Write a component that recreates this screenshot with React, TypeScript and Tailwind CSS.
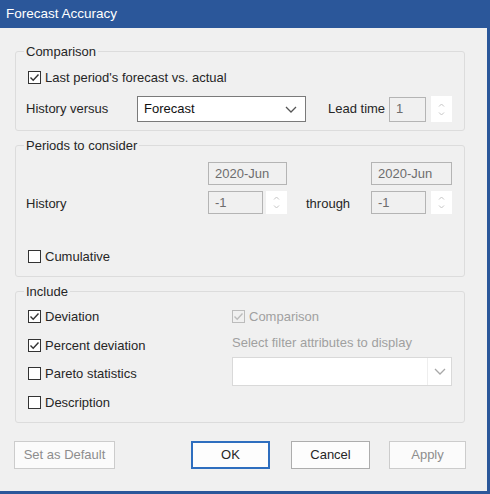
import React from 'react'

const font = { fontFamily: '"Liberation Sans", Arial, sans-serif' }

function Check({ checked, disabled }: { checked?: boolean; disabled?: boolean }) {
  return (
    <span
      className={
        'inline-flex w-[13px] h-[13px] shrink-0 items-center justify-center border ' +
        (disabled ? 'border-[#bcbcbc] bg-[#f0f0f0]' : 'border-[#333333] bg-white')
      }
    >
      {checked && (
        <svg width="11" height="11" viewBox="0 0 11 11">
          <path d="M1.5 5.5 L4.2 8.2 L9.5 2.5" fill="none" stroke={disabled ? '#bcbcbc' : '#333333'} strokeWidth="1.4" />
        </svg>
      )}
    </span>
  )
}

function CheckRow({ label, checked, disabled }: { label: string; checked?: boolean; disabled?: boolean }) {
  return (
    <div className="flex items-center gap-[4px]">
      <Check checked={checked} disabled={disabled} />
      <span className={disabled ? 'text-[#a0a0a0]' : 'text-[#262626]'}>{label}</span>
    </div>
  )
}

function Spinner({ h }: { h: string }) {
  return (
    <div className={'w-[21px] bg-white flex flex-col items-center justify-center gap-[5px] ' + h}>
      <svg width="7" height="4" viewBox="0 0 7 4">
        <path d="M1 3.5 L3.5 1 L6 3.5" fill="none" stroke="#c4c4c4" strokeWidth="1" />
      </svg>
      <svg width="7" height="4" viewBox="0 0 7 4">
        <path d="M1 0.5 L3.5 3 L6 0.5" fill="none" stroke="#c4c4c4" strokeWidth="1" />
      </svg>
    </div>
  )
}

function DisabledBox({ value, w }: { value: string; w: string }) {
  return (
    <div className={'h-[23px] border border-[#b4b4b4] bg-[#f0f0f0] flex items-center px-[6px] text-[#6d6d6d] ' + w}>
      {value}
    </div>
  )
}

function Chevron({ color }: { color: string }) {
  return (
    <svg width="12" height="7" viewBox="0 0 12 7">
      <path d="M1 1 L6 6 L11 1" fill="none" stroke={color} strokeWidth="1.3" />
    </svg>
  )
}

function Group({ title, h, children }: { title: string; h: string; children: React.ReactNode }) {
  return (
    <fieldset className={'w-[450px] border border-[#dcdcdc] rounded-[3px] px-0 ' + h}>
      <legend className="ml-[8px] px-[2px] leading-[15px] text-[#262626]">{title}</legend>
      {children}
    </fieldset>
  )
}

function Btn({ label, w, kind }: { label: string; w: string; kind: 'default' | 'normal' | 'disabled' }) {
  const cls =
    kind === 'default'
      ? 'border-[#2e6ebf] border-[2px] text-[#262626] bg-[#fdfdfd]'
      : kind === 'disabled'
      ? 'border border-[#cccccc] text-[#8d8d8d] bg-[#fbfbfb]'
      : 'border border-[#adadad] text-[#262626] bg-[#fdfdfd]'
  return <div className={'h-[28px] flex items-center justify-center ' + w + ' ' + cls}>{label}</div>
}

export default function App() {
  return (
    <div className="w-[490px] h-[494px] bg-[#2b579a] flex flex-col pr-[3px] pb-[3px] text-[13px]" style={font}>
      <div className="h-[28px] shrink-0 flex items-center pl-[6px] text-white text-[13.5px]">Forecast Accuracy</div>
      <div className="flex-1 bg-[#f0f0f0] pl-[15px] pt-[16px] flex flex-col">
        <Group title="Comparison" h="h-[87px]">
          <div className="pl-[12px] pt-[9px] h-[34px]">
            <CheckRow label="Last period's forecast vs. actual" checked />
          </div>
          <div className="flex items-center h-[26px] mt-[3px]">
            <span className="pl-[10px] w-[121px] text-[#262626]">History versus</span>
            <div className="w-[169px] h-[26px] bg-white border border-[#7a7a7a] flex items-center justify-between pl-[6px] pr-[8px] text-[#111]">
              <span>Forecast</span>
              <Chevron color="#555555" />
            </div>
            <span className="ml-[22px] text-[#262626]">Lead time</span>
            <div className="ml-[4px] w-[37px] h-[25px] border border-[#b4b4b4] bg-[#f0f0f0] flex items-center px-[6px] text-[#6d6d6d]">1</div>
            <div className="ml-[5px]">
              <Spinner h="h-[26px]" />
            </div>
          </div>
        </Group>

        <div className="h-[7px]" />

        <Group title="Periods to consider" h="h-[139px]">
          <div className="flex items-start pt-[9px]">
            <span className="pl-[10px] w-[192px] mt-[32px] text-[#262626]">History</span>
            <div className="flex flex-col gap-[6px] w-[79px]">
              <DisabledBox value="2020-Jun" w="w-[79px]" />
              <div className="flex items-center justify-between">
                <DisabledBox value="-1" w="w-[55px]" />
                <Spinner h="h-[23px]" />
              </div>
            </div>
            <span className="ml-[19px] mt-[32px] w-[65px] text-[#262626]">through</span>
            <div className="flex flex-col gap-[6px] w-[81px]">
              <DisabledBox value="2020-Jun" w="w-[81px]" />
              <div className="flex items-center justify-between">
                <DisabledBox value="-1" w="w-[55px]" />
                <Spinner h="h-[23px]" />
              </div>
            </div>
          </div>
          <div className="pl-[12px] mt-[33px]">
            <CheckRow label="Cumulative" />
          </div>
        </Group>

        <div className="h-[7px]" />

        <Group title="Include" h="h-[139px]">
          <div className="flex pt-[10px]">
            <div className="pl-[12px] w-[216px] flex flex-col gap-[13.5px] leading-[15px]">
              <CheckRow label="Deviation" checked />
              <CheckRow label="Percent deviation" checked />
              <CheckRow label="Pareto statistics" />
              <CheckRow label="Description" />
            </div>
            <div className="flex flex-col leading-[15px]">
              <CheckRow label="Comparison" checked disabled />
              <span className="mt-[11px] text-[#a0a0a0]">Select filter attributes to display</span>
              <div className="mt-[7px] w-[220px] h-[29px] bg-white border border-[#d9d9d9] flex justify-end">
                <div className="w-[24px] h-full border-l border-[#eeeeee] flex items-center justify-center">
                  <Chevron color="#a8a8a8" />
                </div>
              </div>
            </div>
          </div>
        </Group>

        <div className="flex items-center mt-[18px] -ml-[1px]">
          <Btn label="Set as Default" w="w-[101px]" kind="disabled" />
          <div className="w-[76px]" />
          <Btn label="OK" w="w-[79px]" kind="default" />
          <div className="w-[21px]" />
          <Btn label="Cancel" w="w-[79px]" kind="normal" />
          <div className="w-[19px]" />
          <Btn label="Apply" w="w-[77px]" kind="disabled" />
        </div>
      </div>
    </div>
  )
}
